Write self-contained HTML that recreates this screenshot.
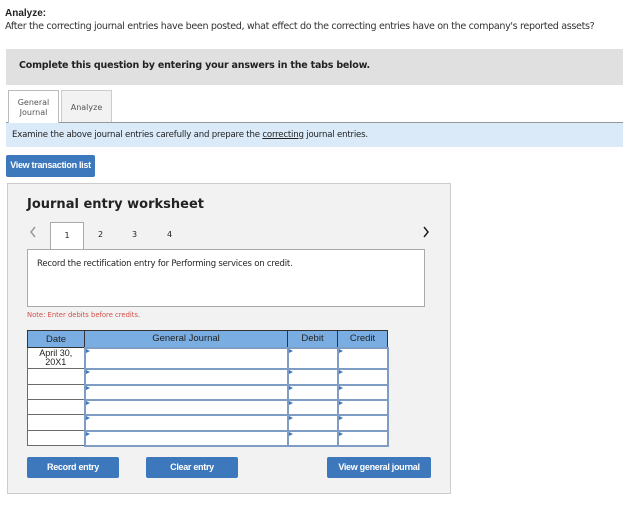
<!DOCTYPE html>
<html><head><style>
*{box-sizing:border-box;margin:0;padding:0}
body{width:628px;height:510px;background:#fff;font-family:"DejaVu Sans","Liberation Sans",sans-serif;color:#222;position:relative;overflow:hidden}
.a{position:absolute}
.btn{position:absolute;background:#3d78bd;color:#fff;font-family:"Liberation Sans",sans-serif;font-weight:bold;font-size:9px;text-align:center;line-height:21px;border-radius:2px;letter-spacing:-0.3px}
table{border-collapse:collapse;position:absolute;left:27px;top:330px;font-family:"Liberation Sans",sans-serif;font-size:9px}
td{border:1px solid #6b6b6b;padding:0;position:relative}
th{background:#7aaee3;border:1px solid #333;font-weight:normal;height:17px;font-size:9.5px}
td.i{border:2px solid #7f9cc4;background:#fff}
td.i:before{content:"";position:absolute;left:0;top:0;border-left:4px solid #3d78bd;border-top:2px solid transparent;border-bottom:2px solid transparent}
</style></head><body>
<div class="a" style="left:5px;top:8px;font-size:10px;font-weight:bold;color:#222;font-family:'Liberation Sans',sans-serif">Analyze:</div>
<div class="a" style="left:5px;top:21px;font-size:9.6px;letter-spacing:-0.35px;color:#333">After the correcting journal entries have been posted, what effect do the correcting entries have on the company's reported assets?</div>
<div class="a" style="left:6px;top:49px;width:617px;height:36px;background:#e0e0e0"></div>
<div class="a" style="left:19px;top:60px;font-size:9.5px;font-weight:bold;letter-spacing:-0.2px">Complete this question by entering your answers in the tabs below.</div>
<div class="a" style="left:6px;top:122px;width:617px;height:1px;background:#999"></div>
<div class="a" style="left:8px;top:90px;width:51px;height:33px;background:#fff;border:1px solid #bbb;border-bottom:none;font-size:8px;color:#555;text-align:center;line-height:10px;padding-top:7px">General<br>Journal</div>
<div class="a" style="left:61px;top:90px;width:51px;height:32px;background:#f2f2f2;border:1px solid #ccc;border-bottom:none;font-size:8px;color:#555;text-align:center;line-height:34px">Analyze</div>
<div class="a" style="left:6px;top:123px;width:617px;height:24px;background:#dbeaf8"></div>
<div class="a" style="left:12px;top:130px;font-size:8.6px;letter-spacing:-0.2px">Examine the above journal entries carefully and prepare the <span style="text-decoration:underline">correcting</span> journal entries.</div>
<div class="btn" style="left:6px;top:155px;width:89px;height:22px">View transaction list</div>
<div class="a" style="left:7px;top:183px;width:444px;height:311px;background:#f2f2f2;border:1px solid #ccc"></div>
<div class="a" style="left:27px;top:197px;font-size:13px;font-weight:bold;color:#222">Journal entry worksheet</div>
<svg class="a" style="left:29px;top:226px" width="8" height="12"><path d="M6 1L2 6L6 11" fill="none" stroke="#999" stroke-width="1.5"/></svg>
<div class="a" style="left:50px;top:222px;width:34px;height:28px;background:#fff;border:1px solid #aaa;border-bottom:none;font-size:8px;text-align:center;line-height:26px">1</div>
<div class="a" style="left:98px;top:230px;font-size:8px">2</div>
<div class="a" style="left:132px;top:230px;font-size:8px">3</div>
<div class="a" style="left:167px;top:230px;font-size:8px">4</div>
<svg class="a" style="left:422px;top:226px" width="8" height="12"><path d="M2 1L6 6L2 11" fill="none" stroke="#222" stroke-width="1.5"/></svg>
<div class="a" style="left:27px;top:249px;width:398px;height:58px;background:#fff;border:1px solid #aaa"></div>
<div class="a" style="left:37px;top:259px;font-size:8.5px;letter-spacing:-0.2px">Record the rectification entry for Performing services on credit.</div>
<div class="a" style="left:27px;top:311px;font-size:6.8px;color:#d0504a">Note: Enter debits before credits.</div>
<table>
<tr><th style="width:57px">Date</th><th style="width:203px">General Journal</th><th style="width:50px">Debit</th><th style="width:50px">Credit</th></tr>
<tr style="height:21px"><td style="text-align:center;line-height:9px;background:#fff">April 30,<br>20X1</td><td class="i"></td><td class="i"></td><td class="i"></td></tr>
<tr style="height:16px"><td style="background:#fff"></td><td class="i"></td><td class="i"></td><td class="i"></td></tr>
<tr style="height:15px"><td style="background:#fff"></td><td class="i"></td><td class="i"></td><td class="i"></td></tr>
<tr style="height:15px"><td style="background:#fff"></td><td class="i"></td><td class="i"></td><td class="i"></td></tr>
<tr style="height:16px"><td style="background:#fff"></td><td class="i"></td><td class="i"></td><td class="i"></td></tr>
<tr style="height:15px"><td style="background:#fff"></td><td class="i"></td><td class="i"></td><td class="i"></td></tr>
</table>
<div class="btn" style="left:27px;top:457px;width:92px;height:21px">Record entry</div>
<div class="btn" style="left:146px;top:457px;width:92px;height:21px">Clear entry</div>
<div class="btn" style="left:327px;top:457px;width:104px;height:21px">View general journal</div>
</body></html>
